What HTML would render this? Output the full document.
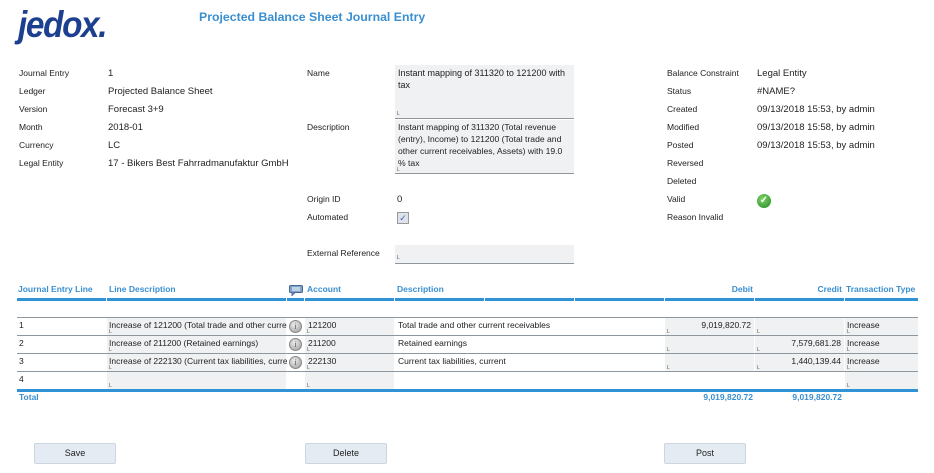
<!DOCTYPE html>
<html><head><meta charset="utf-8">
<style>
*{margin:0;padding:0;box-sizing:border-box}
body{width:934px;height:473px;background:#fff;position:relative;overflow:hidden;font-family:"Liberation Sans",sans-serif;color:#222}
.a{position:absolute;white-space:nowrap}
.l{font-size:8.5px;line-height:12px}
.v{font-size:9.5px;line-height:12px;margin-top:1px}
.g{background:#eff1f2}
.h{font-size:8.5px;font-weight:bold;color:#3a8fd0;line-height:12px}
.c{position:absolute;font-size:5px;color:#555;line-height:5px}
.cell{position:absolute;font-size:8.5px;line-height:12px;padding:1px 3px;white-space:nowrap;overflow:hidden}
.hl{position:absolute;height:1px;background:#8e979e}
.btn{position:absolute;top:443px;height:21px;width:82px;background:#e4ebf3;border:1px solid #ccd6e0;border-radius:2px;font-size:9px;text-align:center;line-height:19px;color:#222}
.ic{position:absolute;width:13px;height:13px;border-radius:50%;background:radial-gradient(circle at 40% 35%,#eee,#999);border:1px solid #888;font-size:8px;line-height:11px;text-align:center;color:#555;font-family:"Liberation Serif",serif}
</style></head><body>
<div class="a" style="left:18px;top:4px;font-size:37px;font-weight:bold;font-style:italic;color:#1c3f8f;letter-spacing:-1.5px;line-height:42px;transform:scaleX(0.9);transform-origin:left">jedox.</div>
<div class="a" style="left:199px;top:9px;font-size:12.3px;font-weight:bold;color:#3a8fd0;line-height:16px">Projected Balance Sheet Journal Entry</div>

<div class="a l" style="left:19px;top:67px">Journal Entry</div><div class="a v" style="left:108px;top:67px">1</div>
<div class="a l" style="left:19px;top:85px">Ledger</div><div class="a v" style="left:108px;top:85px">Projected Balance Sheet</div>
<div class="a l" style="left:19px;top:103px">Version</div><div class="a v" style="left:108px;top:103px">Forecast 3+9</div>
<div class="a l" style="left:19px;top:121px">Month</div><div class="a v" style="left:108px;top:121px">2018-01</div>
<div class="a l" style="left:19px;top:139px">Currency</div><div class="a v" style="left:108px;top:139px">LC</div>
<div class="a l" style="left:19px;top:157px">Legal Entity</div><div class="a v" style="left:108px;top:157px">17 - Bikers Best Fahrradmanufaktur GmbH</div>

<div class="a l" style="left:307px;top:67px">Name</div>
<div class="a g" style="left:395px;top:65px;width:179px;height:54px;border-bottom:1px solid #8e979e;font-size:9px;line-height:12px;padding:2px 2px 2px 3px;white-space:normal">Instant mapping of 311320 to 121200 with tax</div>
<div class="c" style="left:397px;top:112px">L</div>
<div class="a l" style="left:307px;top:121px">Description</div>
<div class="a g" style="left:395px;top:120px;width:179px;height:54px;border-bottom:1px solid #8e979e;font-size:8.6px;line-height:12px;padding:1px 2px 1px 3px;white-space:normal">Instant mapping of 311320 (Total revenue (entry), Income) to 121200 (Total trade and other current receivables, Assets) with 19.0 % tax</div>
<div class="c" style="left:397px;top:168px">L</div>
<div class="a l" style="left:307px;top:193px">Origin ID</div><div class="a v" style="left:397px;top:193px">0</div>
<div class="a l" style="left:307px;top:211px">Automated</div>
<div class="a" style="left:397px;top:212px;width:12px;height:12px;border:1px solid #999;background:#dde3ea;font-size:9px;line-height:10px;text-align:center;color:#4a64b0">✓</div>
<div class="a l" style="left:307px;top:247px">External Reference</div>
<div class="a g" style="left:395px;top:245px;width:179px;height:19px;border-bottom:1px solid #8e979e"></div>
<div class="c" style="left:397px;top:256px">L</div>

<div class="a l" style="left:667px;top:67px">Balance Constraint</div><div class="a v" style="left:757px;top:67px">Legal Entity</div>
<div class="a l" style="left:667px;top:85px">Status</div><div class="a v" style="left:757px;top:85px">#NAME?</div>
<div class="a l" style="left:667px;top:103px">Created</div><div class="a v" style="left:757px;top:103px">09/13/2018 15:53, by admin</div>
<div class="a l" style="left:667px;top:121px">Modified</div><div class="a v" style="left:757px;top:121px">09/13/2018 15:58, by admin</div>
<div class="a l" style="left:667px;top:139px">Posted</div><div class="a v" style="left:757px;top:139px">09/13/2018 15:53, by admin</div>
<div class="a l" style="left:667px;top:157px">Reversed</div>
<div class="a l" style="left:667px;top:175px">Deleted</div>
<div class="a l" style="left:667px;top:193px">Valid</div>
<div class="a" style="left:757px;top:194px;width:14px;height:14px;border-radius:50%;background:radial-gradient(circle at 40% 35%,#7fd36a,#1f8a1f);color:#fff;font-size:10px;line-height:14px;text-align:center;font-weight:bold">✓</div>
<div class="a l" style="left:667px;top:211px">Reason Invalid</div>

<div class="a h" style="left:18px;top:283px">Journal Entry Line</div>
<div class="a h" style="left:109px;top:283px">Line Description</div>
<svg class="a" style="left:289px;top:285px" width="15" height="11" viewBox="0 0 15 11"><rect x="0.5" y="0.5" width="13" height="7" rx="1" fill="#7fa3c9" stroke="#4a6c93"/><path d="M3 7.5 L3 10.5 L6 7.5" fill="#7fa3c9" stroke="#4a6c93"/><line x1="3" y1="3" x2="11" y2="3" stroke="#fff"/><line x1="3" y1="5" x2="11" y2="5" stroke="#fff"/></svg>
<div class="a h" style="left:307px;top:283px">Account</div>
<div class="a h" style="left:397px;top:283px">Description</div>
<div class="a h" style="left:664px;top:283px;width:89px;text-align:right">Debit</div>
<div class="a h" style="left:754px;top:283px;width:88px;text-align:right">Credit</div>
<div class="a h" style="left:846px;top:283px">Transaction Type</div>
<div class="a" style="left:17px;top:298px;width:901px;height:3px;background:#2f93d6"></div>
<div class="a" style="left:106px;top:298px;width:1px;height:3px;background:#fff"></div>
<div class="a" style="left:286px;top:298px;width:1px;height:3px;background:#fff"></div>
<div class="a" style="left:304px;top:298px;width:1px;height:3px;background:#fff"></div>
<div class="a" style="left:394px;top:298px;width:1px;height:3px;background:#fff"></div>
<div class="a" style="left:484px;top:298px;width:1px;height:3px;background:#fff"></div>
<div class="a" style="left:574px;top:298px;width:1px;height:3px;background:#fff"></div>
<div class="a" style="left:664px;top:298px;width:1px;height:3px;background:#fff"></div>
<div class="a" style="left:754px;top:298px;width:1px;height:3px;background:#fff"></div>
<div class="a" style="left:844px;top:298px;width:1px;height:3px;background:#fff"></div>

<div class="a g" style="left:107px;top:317px;width:179px;height:72px"></div>
<div class="a g" style="left:305px;top:317px;width:89px;height:72px"></div>
<div class="a g" style="left:665px;top:317px;width:89px;height:54px"></div>
<div class="a g" style="left:755px;top:317px;width:89px;height:54px"></div>
<div class="a g" style="left:845px;top:317px;width:73px;height:72px"></div>

<div class="hl" style="left:17px;top:317px;width:901px"></div>
<div class="hl" style="left:17px;top:335px;width:901px"></div>
<div class="hl" style="left:17px;top:353px;width:901px"></div>
<div class="hl" style="left:17px;top:371px;width:901px"></div>
<div class="a" style="left:17px;top:389px;width:901px;height:3px;background:#2f93d6"></div>

<div class="cell" style="left:16px;top:318px">1</div>
<div class="cell" style="left:106px;top:318px;width:181px">Increase of 121200 (Total trade and other current receivables)</div>
<div class="ic" style="left:289px;top:320px">i</div>
<div class="cell" style="left:305px;top:318px">121200</div>
<div class="cell" style="left:395px;top:318px">Total trade and other current receivables</div>
<div class="cell" style="left:665px;top:318px;width:89px;text-align:right">9,019,820.72</div>
<div class="cell" style="left:844px;top:318px">Increase</div>

<div class="cell" style="left:16px;top:336px">2</div>
<div class="cell" style="left:106px;top:336px;width:181px">Increase of 211200 (Retained earnings)</div>
<div class="ic" style="left:289px;top:338px">i</div>
<div class="cell" style="left:305px;top:336px">211200</div>
<div class="cell" style="left:395px;top:336px">Retained earnings</div>
<div class="cell" style="left:755px;top:336px;width:89px;text-align:right">7,579,681.28</div>
<div class="cell" style="left:844px;top:336px">Increase</div>

<div class="cell" style="left:16px;top:354px">3</div>
<div class="cell" style="left:106px;top:354px;width:181px">Increase of 222130 (Current tax liabilities, current)</div>
<div class="ic" style="left:289px;top:356px">i</div>
<div class="cell" style="left:305px;top:354px">222130</div>
<div class="cell" style="left:395px;top:354px">Current tax liabilities, current</div>
<div class="cell" style="left:755px;top:354px;width:89px;text-align:right">1,440,139.44</div>
<div class="cell" style="left:844px;top:354px">Increase</div>

<div class="cell" style="left:16px;top:372px">4</div>

<div class="c" style="left:109px;top:330px">L</div><div class="c" style="left:307px;top:330px">L</div><div class="c" style="left:667px;top:330px">L</div><div class="c" style="left:757px;top:330px">L</div><div class="c" style="left:847px;top:330px">L</div>
<div class="c" style="left:109px;top:348px">L</div><div class="c" style="left:307px;top:348px">L</div><div class="c" style="left:667px;top:348px">L</div><div class="c" style="left:757px;top:348px">L</div><div class="c" style="left:847px;top:348px">L</div>
<div class="c" style="left:109px;top:366px">L</div><div class="c" style="left:307px;top:366px">L</div><div class="c" style="left:667px;top:366px">L</div><div class="c" style="left:757px;top:366px">L</div><div class="c" style="left:847px;top:366px">L</div>
<div class="c" style="left:109px;top:384px">L</div><div class="c" style="left:307px;top:384px">L</div><div class="c" style="left:847px;top:384px">L</div>

<div class="a h" style="left:19px;top:391px">Total</div>
<div class="a h" style="left:664px;top:391px;width:89px;text-align:right">9,019,820.72</div>
<div class="a h" style="left:754px;top:391px;width:88px;text-align:right">9,019,820.72</div>

<div class="btn" style="left:34px">Save</div>
<div class="btn" style="left:305px">Delete</div>
<div class="btn" style="left:664px">Post</div>
</body></html>
